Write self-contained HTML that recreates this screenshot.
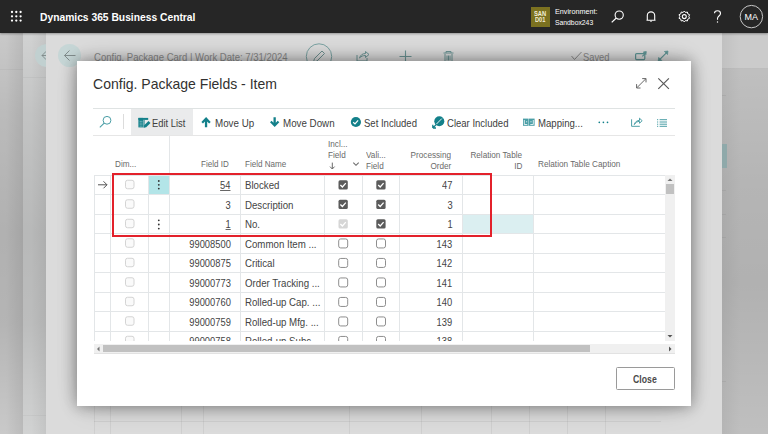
<!DOCTYPE html><html><head><meta charset="utf-8"><style>
html,body{margin:0;padding:0;width:768px;height:434px;overflow:hidden;background:#c4c4c4;font-family:"Liberation Sans", sans-serif;}
.t{position:absolute;white-space:nowrap;line-height:1;}
svg{position:absolute;overflow:visible}
</style></head><body>
<div style="position:absolute;left:0px;top:33px;width:23px;height:401px;background:linear-gradient(180deg,rgba(0,0,0,0) 0px,rgba(0,0,0,.07) 80px,rgba(0,0,0,.12) 200px,rgba(0,0,0,.10) 290px,rgba(0,0,0,.0) 401px),linear-gradient(90deg,rgba(0,0,0,0),rgba(0,0,0,0) 25%,rgba(0,0,0,.07)),#c9c9c9"></div>
<div style="position:absolute;left:23px;top:33px;width:23px;height:401px;background:linear-gradient(180deg,rgba(0,0,0,0) 0px,rgba(0,0,0,.07) 80px,rgba(0,0,0,.12) 200px,rgba(0,0,0,.10) 290px,rgba(0,0,0,.0) 401px),linear-gradient(90deg,rgba(0,0,0,0),rgba(0,0,0,0) 35%,rgba(0,0,0,.06)),#d1d2d2"></div>
<div style="position:absolute;left:46px;top:33px;width:676px;height:401px;background:#dbdbdb"></div>
<div style="position:absolute;left:722px;top:33px;width:46px;height:401px;background:linear-gradient(180deg,rgba(0,0,0,0) 35px,rgba(0,0,0,.06) 36px,rgba(0,0,0,.11) 150px,rgba(0,0,0,.13) 250px,rgba(0,0,0,.06) 401px),linear-gradient(90deg,rgba(0,0,0,.05),rgba(0,0,0,0) 40%),#cbcbcb"></div>
<div style="position:absolute;left:0px;top:69px;width:23px;height:1px;background:rgba(0,0,0,.035)"></div>
<div style="position:absolute;left:23px;top:77px;width:23px;height:1px;background:rgba(0,0,0,.035)"></div>
<div style="position:absolute;left:23px;top:415px;width:23px;height:1px;background:rgba(0,0,0,.03)"></div>
<div style="position:absolute;left:722px;top:68px;width:46px;height:1px;background:rgba(0,0,0,.04)"></div>
<div style="position:absolute;left:722px;top:144px;width:5px;height:24px;background:#8fa9aa"></div>
<div style="position:absolute;left:722px;top:95px;width:4px;height:1px;background:rgba(0,0,0,.05)"></div>
<div style="position:absolute;left:722px;top:190px;width:4px;height:1px;background:rgba(0,0,0,.05)"></div>
<div style="position:absolute;left:722px;top:214px;width:4px;height:1px;background:rgba(0,0,0,.05)"></div>
<div style="position:absolute;left:722px;top:237px;width:4px;height:1px;background:rgba(0,0,0,.05)"></div>
<div style="position:absolute;left:722px;top:381px;width:4px;height:1px;background:rgba(0,0,0,.05)"></div>
<div style="position:absolute;left:23px;top:33px;width:23px;height:40px;overflow:hidden"><div style="position:absolute;left:12px;top:11px;width:23px;height:23px;border-radius:50%;background:#c1d0d0"></div><svg style="left:0;top:0" width="23" height="40"><path d="M19 22.5h8M19 22.5l4.3-4.3M19 22.5l4.3 4.3" stroke="#7d8888" stroke-width=".9" fill="none"/></svg></div>
<div style="position:absolute;left:58px;top:44px;width:23px;height:23px;border-radius:50%;background:#c6d6d6"></div>
<svg style="left:0;top:0" width="768" height="434"><path d="M64.5 55.5h11M64.5 55.5l5-5M64.5 55.5l5 5" stroke="#7a8585" stroke-width=".9" fill="none"/></svg>
<div class="t" style="left:93.50px;top:52.19px;font-size:11px;color:#8a8a8a;font-weight:400;transform:scaleX(0.867);transform-origin:0 0;">Config. Package Card | Work Date: 7/31/2024</div>
<svg style="left:0;top:0" width="768" height="434"><circle cx="319" cy="56.5" r="12.7" stroke="#7aa2a2" stroke-width="1" fill="none"/><path d="M313.5 62l1-3.5 7.5-7.5 2.5 2.5-7.5 7.5z" stroke="#6d8f8f" stroke-width="1" fill="none"/><path d="M357 55v6h10v-3M359.5 58c1-3 3-4.5 6-4.5v-2l3.5 3-3.5 3v-2c-2.5 0-4.5 0.8-6 2.5z" stroke="#6d9696" stroke-width="1" fill="none"/><path d="M399.5 56.5h12M405.5 50.5v12" stroke="#6d9696" stroke-width="1.1" fill="none"/><path d="M443.5 53h10M446 53v-1.5h5v1.5M445 54v8h7v-8M447 55.5v5M448.5 55.5v5M450 55.5v5" stroke="#6d9696" stroke-width="1" fill="none"/><path d="M571.5 56l3 3.5 7-7.5" stroke="#8a8a8a" stroke-width="1" fill="none"/><rect x="635.6" y="53.6" width="9.2" height="6" rx="1" stroke="#5f9696" stroke-width="1.2" fill="none"/><path d="M642.3 56.3l3-3" stroke="#5f9696" stroke-width="1.1"/><path d="M646.3 51.6l-3 .4 2.6 2.6z" fill="#5f9696" stroke="#5f9696" stroke-width=".8" stroke-linejoin="round"/><path d="M659.6 59.6l7-7" stroke="#5f9696" stroke-width="1.1" fill="none"/><path d="M668 51l-3.6.5 3.1 3.1z M658.2 61l3.6-.5-3.1-3.1z" fill="#5f9696" stroke="#5f9696" stroke-width=".7" stroke-linejoin="round"/></svg>
<div class="t" style="left:583.00px;top:52.19px;font-size:11px;color:#8a8a8a;font-weight:400;transform:scaleX(0.85);transform-origin:0 0;">Saved</div>
<div style="position:absolute;left:94px;top:406px;width:1px;height:28px;background:rgba(0,0,0,.055)"></div>
<div style="position:absolute;left:110px;top:406px;width:1px;height:28px;background:rgba(0,0,0,.055)"></div>
<div style="position:absolute;left:181px;top:406px;width:1px;height:28px;background:rgba(0,0,0,.055)"></div>
<div style="position:absolute;left:203px;top:406px;width:1px;height:28px;background:rgba(0,0,0,.055)"></div>
<div style="position:absolute;left:349px;top:406px;width:1px;height:28px;background:rgba(0,0,0,.055)"></div>
<div style="position:absolute;left:421px;top:406px;width:1px;height:28px;background:rgba(0,0,0,.055)"></div>
<div style="position:absolute;left:491px;top:406px;width:1px;height:28px;background:rgba(0,0,0,.055)"></div>
<div style="position:absolute;left:529px;top:406px;width:1px;height:28px;background:rgba(0,0,0,.055)"></div>
<div style="position:absolute;left:567px;top:406px;width:1px;height:28px;background:rgba(0,0,0,.055)"></div>
<div style="position:absolute;left:605px;top:406px;width:1px;height:28px;background:rgba(0,0,0,.055)"></div>
<div style="position:absolute;left:94px;top:421px;width:567px;height:1px;background:rgba(0,0,0,.05)"></div>
<div style="position:absolute;left:0;top:0;width:768px;height:33px;z-index:10;background:#262626;box-shadow:0 1px 2px rgba(0,0,0,.32)">
<svg style="left:0;top:0" width="40" height="33"><circle cx="12" cy="12" r="1.15" fill="#fff"/><circle cx="16.3" cy="12" r="1.15" fill="#fff"/><circle cx="20.6" cy="12" r="1.15" fill="#fff"/><circle cx="12" cy="16.3" r="1.15" fill="#fff"/><circle cx="16.3" cy="16.3" r="1.15" fill="#fff"/><circle cx="20.6" cy="16.3" r="1.15" fill="#fff"/><circle cx="12" cy="20.6" r="1.15" fill="#fff"/><circle cx="16.3" cy="20.6" r="1.15" fill="#fff"/><circle cx="20.6" cy="20.6" r="1.15" fill="#fff"/></svg>
<div class="t" style="left:39.60px;top:11.62px;font-size:11.2px;color:#fff;font-weight:700;transform:scaleX(0.919);transform-origin:0 0;">Dynamics 365 Business Central</div>
<div style="position:absolute;left:531px;top:7px;width:19px;height:20px;background:#7b7120"></div>
<div class="t" style="left:533.60px;top:10.87px;font-size:6.3px;color:#f2eed8;font-weight:700;transform:scaleX(0.92);transform-origin:0 0;">SAN</div>
<div class="t" style="left:534.60px;top:17.17px;font-size:6.3px;color:#f2eed8;font-weight:700;transform:scaleX(0.9);transform-origin:0 0;">D01</div>
<div class="t" style="left:555.00px;top:9.24px;font-size:6.8px;color:#fff;font-weight:400;transform:scaleX(1.06);transform-origin:0 0;">Environment:</div>
<div class="t" style="left:555.00px;top:19.84px;font-size:6.8px;color:#fff;font-weight:400;transform:scaleX(1.0);transform-origin:0 0;">Sandbox243</div>
<svg style="left:0;top:0" width="768" height="33"><circle cx="619.2" cy="15.1" r="4.1" stroke="#fff" stroke-width="1.1" fill="none"/><path d="M616.3 18l-4.6 4.4" stroke="#fff" stroke-width="1.2"/><path d="M647.3 20.2v-4.6a3.7 3.7 0 0 1 7.4 0v4.6zM646.5 20.2h9" stroke="#fff" stroke-width="1.1" fill="none" stroke-linejoin="round"/><path d="M649.6 20.8l1.4 1.2 1.4-1.2z" fill="#fff"/><circle cx="684.3" cy="16.6" r="2" stroke="#fff" stroke-width="1.1" fill="none"/><path d="M684.3 11l1.2 1.5 1.9-.5.4 1.9 1.8.8-.8 1.8.8 1.8-1.8.8-.4 1.9-1.9-.5-1.2 1.5-1.2-1.5-1.9.5-.4-1.9-1.8-.8.8-1.8-.8-1.8 1.8-.8.4-1.9 1.9.5z" stroke="#fff" stroke-width="1" fill="none" stroke-linejoin="round"/><path d="M714.5 13.3c0-1.6 1.3-2.5 3-2.5s3 1 3 2.6c0 2.5-3 2.6-3 5v1.3" stroke="#fff" stroke-width="1.1" fill="none"/><circle cx="717.5" cy="22" r=".7" fill="#fff"/><circle cx="751.4" cy="16.6" r="11.2" stroke="#c8c8c8" stroke-width="1" fill="none"/></svg>
<div class="t" style="left:744.60px;top:13.18px;font-size:9.0px;color:#fff;font-weight:400;transform:scaleX(1.0);transform-origin:0 0;">MA</div>
</div>
<div style="position:absolute;left:77px;top:61px;width:614.4px;height:344.6px;background:#fff;box-shadow:0 0 13px 1px rgba(0,0,0,.30),0 -6px 26px -8px rgba(0,0,0,.22),0 6px 26px -8px rgba(0,0,0,.22)"></div>
<div class="t" style="left:92.90px;top:75.70px;font-size:15px;color:#323130;font-weight:400;transform:scaleX(0.935);transform-origin:0 0;">Config. Package Fields - Item</div>
<svg style="left:0;top:0" width="768" height="434"><path d="M636.8 87.8l9-9M642.2 78.6h3.8v3.8M636.6 84.1v3.9h3.9" stroke="#666" stroke-width="1" fill="none"/><path d="M658.3 78.3l10.6 10.6M668.9 78.3l-10.6 10.6" stroke="#5a5a5a" stroke-width="1.2" fill="none"/></svg>
<div style="position:absolute;left:93px;top:108px;width:582px;height:1px;background:#dfe3e3"></div>
<div style="position:absolute;left:93px;top:135px;width:582px;height:1px;background:#e6e6e6"></div>
<div style="position:absolute;left:131px;top:109px;width:62px;height:26px;background:#eaebec"></div>
<div style="position:absolute;left:123px;top:114px;width:1px;height:15px;background:#dcdcdc"></div>
<div class="t" style="left:152.00px;top:117.69px;font-size:11px;color:#404040;font-weight:400;transform:scaleX(0.85);transform-origin:0 0;">Edit List</div>
<div class="t" style="left:214.60px;top:117.69px;font-size:11px;color:#404040;font-weight:400;transform:scaleX(0.89);transform-origin:0 0;">Move Up</div>
<div class="t" style="left:283.20px;top:117.69px;font-size:11px;color:#404040;font-weight:400;transform:scaleX(0.888);transform-origin:0 0;">Move Down</div>
<div class="t" style="left:364.00px;top:117.69px;font-size:11px;color:#404040;font-weight:400;transform:scaleX(0.866);transform-origin:0 0;">Set Included</div>
<div class="t" style="left:446.60px;top:117.69px;font-size:11px;color:#404040;font-weight:400;transform:scaleX(0.866);transform-origin:0 0;">Clear Included</div>
<div class="t" style="left:537.80px;top:117.69px;font-size:11px;color:#404040;font-weight:400;transform:scaleX(0.873);transform-origin:0 0;">Mapping...</div>
<svg style="left:0;top:0" width="768" height="434"><circle cx="107" cy="120.3" r="3.9" stroke="#4a9ea6" stroke-width="1" fill="none"/><path d="M104.2 123.1l-4.4 4.3" stroke="#4a9ea6" stroke-width="1.1"/><rect x="138.4" y="117.9" width="9.8" height="2" fill="#13808a"/><rect x="138.4" y="117.9" width="4.6" height="9.5" fill="#13808a"/><path d="M140.2 120.8v6M141.9 120.8v6" stroke="#fff" stroke-width=".6" stroke-dasharray="1 .8"/><rect x="143" y="120" width="2" height="7.4" fill="#13808a" opacity=".55"/><path d="M143.6 127.8l.6-2.6 4.3-4.3 2 2-4.3 4.3z" fill="#13808a"/><path d="M206.1 117l4.6 4.9-1.6 1.5-1.9-2v5.9h-2.3v-5.9l-1.9 2-1.6-1.5z" fill="#13808a"/><path d="M274.7 127.1l4.6-4.9-1.6-1.5-1.9 2v-5.4h-2.3v5.4l-1.9-2-1.6 1.5z" fill="#13808a"/><circle cx="355.9" cy="122" r="5.1" fill="#13808a"/><path d="M353.2 122.3l1.8 1.7 3.1-3.7" stroke="#fff" stroke-width="1.2" fill="none"/><circle cx="439.3" cy="121.2" r="5" fill="#13808a"/><path d="M441.8 118.6l-5.5 5.6" stroke="#fff" stroke-width=".9"/><path d="M432.8 128l3.6-3.6M432.8 128v-3.2M432.8 128h3.2" stroke="#13808a" stroke-width="1.3" fill="none"/><rect x="523" y="118.6" width="5.6" height="7.2" fill="#4a9ea6"/><rect x="529" y="118.6" width="5.6" height="7.2" fill="#4a9ea6"/><path d="M524.3 120v4.5h3M533.3 120v4.5h-3M526 121.8h1.2M530.4 121.8h1.2" stroke="#fff" stroke-width=".8" fill="none"/><circle cx="599.3" cy="122.3" r=".85" fill="#13808a"/><circle cx="603.4" cy="122.3" r=".85" fill="#13808a"/><circle cx="607.5" cy="122.3" r=".85" fill="#13808a"/><path d="M631.6 119.3v7h8.2" stroke="#4a9ea6" stroke-width="1" fill="none"/><path d="M634.3 124.6c.6-2.6 2.6-4.2 5.2-4.2v-2.2l2.6 2.5-2.6 2.6v-1.9c-2 0-3.8.9-5.2 3.2z" stroke="#4a9ea6" stroke-width="1" fill="none" stroke-linejoin="round"/><path d="M657 119.7h1.2M657 122h1.2M657 124.2h1.2M657 126.3h1.2M659.6 119.7h7.4M659.6 122h7.4M659.6 124.2h7.4M659.6 126.3h7.4" stroke="#4a9ea6" stroke-width="1"/></svg>
<div style="position:absolute;left:0;top:0;width:768px;height:341px;overflow:hidden">
<div style="position:absolute;left:94px;top:175px;width:571px;height:1px;background:#e3e6e8"></div>
<div style="position:absolute;left:94px;top:194px;width:571px;height:1px;background:#e3e6e8"></div>
<div style="position:absolute;left:94px;top:214px;width:571px;height:1px;background:#e3e6e8"></div>
<div style="position:absolute;left:94px;top:233px;width:571px;height:1px;background:#e3e6e8"></div>
<div style="position:absolute;left:94px;top:253px;width:571px;height:1px;background:#e3e6e8"></div>
<div style="position:absolute;left:94px;top:272px;width:571px;height:1px;background:#e3e6e8"></div>
<div style="position:absolute;left:94px;top:292px;width:571px;height:1px;background:#e3e6e8"></div>
<div style="position:absolute;left:94px;top:311px;width:571px;height:1px;background:#e3e6e8"></div>
<div style="position:absolute;left:94px;top:331px;width:571px;height:1px;background:#e3e6e8"></div>
<div style="position:absolute;left:94px;top:175px;width:1px;height:166px;background:#e3e6e8"></div>
<div style="position:absolute;left:110px;top:175px;width:1px;height:166px;background:#e3e6e8"></div>
<div style="position:absolute;left:148px;top:175px;width:1px;height:166px;background:#e3e6e8"></div>
<div style="position:absolute;left:240px;top:175px;width:1px;height:166px;background:#e3e6e8"></div>
<div style="position:absolute;left:324px;top:175px;width:1px;height:166px;background:#e3e6e8"></div>
<div style="position:absolute;left:362px;top:175px;width:1px;height:166px;background:#e3e6e8"></div>
<div style="position:absolute;left:399px;top:175px;width:1px;height:166px;background:#e3e6e8"></div>
<div style="position:absolute;left:462px;top:175px;width:1px;height:166px;background:#e3e6e8"></div>
<div style="position:absolute;left:533px;top:175px;width:1px;height:166px;background:#e3e6e8"></div>
<div style="position:absolute;left:169px;top:135px;width:1px;height:206px;background:#e3e6e8"></div>
<div style="position:absolute;left:149px;top:176px;width:20px;height:18px;background:#b3e5e8"></div>
<div style="position:absolute;left:463px;top:215px;width:70px;height:18px;background:#dbeff1"></div>
</div>
<div class="t" style="left:114.60px;top:159.16px;font-size:9.5px;color:#6a6a6a;font-weight:400;transform:scaleX(0.86);transform-origin:0 0;">Dim...</div>
<div class="t" style="right:539.00px;top:159.36px;font-size:9.5px;color:#6a6a6a;font-weight:400;transform:scaleX(0.847);transform-origin:100% 0;">Field ID</div>
<div class="t" style="left:244.80px;top:159.36px;font-size:9.5px;color:#6a6a6a;font-weight:400;transform:scaleX(0.85);transform-origin:0 0;">Field Name</div>
<div class="t" style="left:328.30px;top:139.26px;font-size:9.5px;color:#6a6a6a;font-weight:400;transform:scaleX(0.86);transform-origin:0 0;">Incl...</div>
<div class="t" style="left:328.30px;top:150.06px;font-size:9.5px;color:#6a6a6a;font-weight:400;transform:scaleX(0.86);transform-origin:0 0;">Field</div>
<svg style="left:0;top:0" width="768" height="434"><path d="M353.3 162.6l2.7 2.7 2.7-2.7" stroke="#6a6a6a" stroke-width="1.1" fill="none"/><path d="M332.3 162.6v6.3M330 166.6l2.3 2.4 2.3-2.4" stroke="#6a6a6a" stroke-width="1" fill="none"/></svg>
<div class="t" style="left:366.25px;top:150.06px;font-size:9.5px;color:#6a6a6a;font-weight:400;transform:scaleX(0.86);transform-origin:0 0;">Vali...</div>
<div class="t" style="left:366.25px;top:160.66px;font-size:9.5px;color:#6a6a6a;font-weight:400;transform:scaleX(0.86);transform-origin:0 0;">Field</div>
<div class="t" style="right:317.20px;top:150.06px;font-size:9.5px;color:#6a6a6a;font-weight:400;transform:scaleX(0.86);transform-origin:100% 0;">Processing</div>
<div class="t" style="right:317.20px;top:160.66px;font-size:9.5px;color:#6a6a6a;font-weight:400;transform:scaleX(0.86);transform-origin:100% 0;">Order</div>
<div class="t" style="right:245.70px;top:150.06px;font-size:9.5px;color:#6a6a6a;font-weight:400;transform:scaleX(0.86);transform-origin:100% 0;">Relation Table</div>
<div class="t" style="right:245.70px;top:160.66px;font-size:9.5px;color:#6a6a6a;font-weight:400;transform:scaleX(0.86);transform-origin:100% 0;">ID</div>
<div class="t" style="left:537.90px;top:159.16px;font-size:9.5px;color:#6a6a6a;font-weight:400;transform:scaleX(0.863);transform-origin:0 0;">Relation Table Caption</div>
<div style="position:absolute;left:0;top:0;width:768px;height:341px;overflow:hidden">
<div class="t" style="right:537.60px;top:181.03px;font-size:10.3px;color:#444444;font-weight:400;transform:scaleX(0.906);transform-origin:100% 0;text-decoration:underline;text-underline-offset:1px;text-decoration-color:#666;">54</div>
<div class="t" style="left:245.20px;top:181.03px;font-size:10.3px;color:#444444;font-weight:400;transform:scaleX(0.94);transform-origin:0 0;">Blocked</div>
<div class="t" style="right:315.60px;top:181.03px;font-size:10.3px;color:#444444;font-weight:400;transform:scaleX(0.906);transform-origin:100% 0;">47</div>
<div class="t" style="right:537.60px;top:200.53px;font-size:10.3px;color:#444444;font-weight:400;transform:scaleX(0.906);transform-origin:100% 0;">3</div>
<div class="t" style="left:245.20px;top:200.53px;font-size:10.3px;color:#444444;font-weight:400;transform:scaleX(0.94);transform-origin:0 0;">Description</div>
<div class="t" style="right:315.60px;top:200.53px;font-size:10.3px;color:#444444;font-weight:400;transform:scaleX(0.906);transform-origin:100% 0;">3</div>
<div class="t" style="right:537.60px;top:220.03px;font-size:10.3px;color:#444444;font-weight:400;transform:scaleX(0.906);transform-origin:100% 0;text-decoration:underline;text-underline-offset:1px;text-decoration-color:#666;">1</div>
<div class="t" style="left:245.20px;top:220.03px;font-size:10.3px;color:#444444;font-weight:400;transform:scaleX(0.94);transform-origin:0 0;">No.</div>
<div class="t" style="right:315.60px;top:220.03px;font-size:10.3px;color:#444444;font-weight:400;transform:scaleX(0.906);transform-origin:100% 0;">1</div>
<div class="t" style="right:537.60px;top:239.53px;font-size:10.3px;color:#444444;font-weight:400;transform:scaleX(0.906);transform-origin:100% 0;">99008500</div>
<div class="t" style="left:245.20px;top:239.53px;font-size:10.3px;color:#444444;font-weight:400;transform:scaleX(0.94);transform-origin:0 0;">Common Item ...</div>
<div class="t" style="right:315.60px;top:239.53px;font-size:10.3px;color:#444444;font-weight:400;transform:scaleX(0.906);transform-origin:100% 0;">143</div>
<div class="t" style="right:537.60px;top:259.03px;font-size:10.3px;color:#444444;font-weight:400;transform:scaleX(0.906);transform-origin:100% 0;">99000875</div>
<div class="t" style="left:245.20px;top:259.03px;font-size:10.3px;color:#444444;font-weight:400;transform:scaleX(0.94);transform-origin:0 0;">Critical</div>
<div class="t" style="right:315.60px;top:259.03px;font-size:10.3px;color:#444444;font-weight:400;transform:scaleX(0.906);transform-origin:100% 0;">142</div>
<div class="t" style="right:537.60px;top:278.53px;font-size:10.3px;color:#444444;font-weight:400;transform:scaleX(0.906);transform-origin:100% 0;">99000773</div>
<div class="t" style="left:245.20px;top:278.53px;font-size:10.3px;color:#444444;font-weight:400;transform:scaleX(0.94);transform-origin:0 0;">Order Tracking ...</div>
<div class="t" style="right:315.60px;top:278.53px;font-size:10.3px;color:#444444;font-weight:400;transform:scaleX(0.906);transform-origin:100% 0;">141</div>
<div class="t" style="right:537.60px;top:298.03px;font-size:10.3px;color:#444444;font-weight:400;transform:scaleX(0.906);transform-origin:100% 0;">99000760</div>
<div class="t" style="left:245.20px;top:298.03px;font-size:10.3px;color:#444444;font-weight:400;transform:scaleX(0.94);transform-origin:0 0;">Rolled-up Cap. ...</div>
<div class="t" style="right:315.60px;top:298.03px;font-size:10.3px;color:#444444;font-weight:400;transform:scaleX(0.906);transform-origin:100% 0;">140</div>
<div class="t" style="right:537.60px;top:317.53px;font-size:10.3px;color:#444444;font-weight:400;transform:scaleX(0.906);transform-origin:100% 0;">99000759</div>
<div class="t" style="left:245.20px;top:317.53px;font-size:10.3px;color:#444444;font-weight:400;transform:scaleX(0.94);transform-origin:0 0;">Rolled-up Mfg. ...</div>
<div class="t" style="right:315.60px;top:317.53px;font-size:10.3px;color:#444444;font-weight:400;transform:scaleX(0.906);transform-origin:100% 0;">139</div>
<div class="t" style="right:537.60px;top:337.03px;font-size:10.3px;color:#444444;font-weight:400;transform:scaleX(0.906);transform-origin:100% 0;">99000758</div>
<div class="t" style="left:245.20px;top:337.03px;font-size:10.3px;color:#444444;font-weight:400;transform:scaleX(0.94);transform-origin:0 0;">Rolled-up Subc...</div>
<div class="t" style="right:315.60px;top:337.03px;font-size:10.3px;color:#444444;font-weight:400;transform:scaleX(0.906);transform-origin:100% 0;">138</div>
<svg style="left:0;top:0" width="768" height="434"><rect x="125.5" y="180.25" width="8.5" height="8.5" rx="2" stroke="#d4d4d4" stroke-width="1" fill="#fafafa"/><rect x="338.5" y="180.25" width="9.3" height="9.3" rx="1.5" fill="#5b5b5b"/><path d="M340.4 184.95l2 2 3.4-3.8" stroke="#fff" stroke-width="1.3" fill="none"/><rect x="376.3" y="180.25" width="9.3" height="9.3" rx="1.5" fill="#5b5b5b"/><path d="M378.2 184.95l2 2 3.4-3.8" stroke="#fff" stroke-width="1.3" fill="none"/><rect x="125.5" y="199.75" width="8.5" height="8.5" rx="2" stroke="#d4d4d4" stroke-width="1" fill="#fafafa"/><rect x="338.5" y="199.75" width="9.3" height="9.3" rx="1.5" fill="#5b5b5b"/><path d="M340.4 204.45l2 2 3.4-3.8" stroke="#fff" stroke-width="1.3" fill="none"/><rect x="376.3" y="199.75" width="9.3" height="9.3" rx="1.5" fill="#5b5b5b"/><path d="M378.2 204.45l2 2 3.4-3.8" stroke="#fff" stroke-width="1.3" fill="none"/><rect x="125.5" y="219.25" width="8.5" height="8.5" rx="2" stroke="#d4d4d4" stroke-width="1" fill="#fafafa"/><rect x="338.5" y="219.25" width="9.3" height="9.3" rx="1.5" fill="#d6d6d6"/><path d="M340.4 223.95l2 2 3.4-3.8" stroke="#fff" stroke-width="1.3" fill="none"/><rect x="376.3" y="219.25" width="9.3" height="9.3" rx="1.5" fill="#5b5b5b"/><path d="M378.2 223.95l2 2 3.4-3.8" stroke="#fff" stroke-width="1.3" fill="none"/><rect x="125.5" y="238.75" width="8.5" height="8.5" rx="2" stroke="#d4d4d4" stroke-width="1" fill="#fafafa"/><rect x="338.7" y="238.95" width="9" height="9" rx="2" stroke="#8e8e8e" stroke-width="1" fill="#fff"/><rect x="376.5" y="238.95" width="9" height="9" rx="2" stroke="#8e8e8e" stroke-width="1" fill="#fff"/><rect x="125.5" y="258.25" width="8.5" height="8.5" rx="2" stroke="#d4d4d4" stroke-width="1" fill="#fafafa"/><rect x="338.7" y="258.45" width="9" height="9" rx="2" stroke="#8e8e8e" stroke-width="1" fill="#fff"/><rect x="376.5" y="258.45" width="9" height="9" rx="2" stroke="#8e8e8e" stroke-width="1" fill="#fff"/><rect x="125.5" y="277.75" width="8.5" height="8.5" rx="2" stroke="#d4d4d4" stroke-width="1" fill="#fafafa"/><rect x="338.7" y="277.95" width="9" height="9" rx="2" stroke="#8e8e8e" stroke-width="1" fill="#fff"/><rect x="376.5" y="277.95" width="9" height="9" rx="2" stroke="#8e8e8e" stroke-width="1" fill="#fff"/><rect x="125.5" y="297.25" width="8.5" height="8.5" rx="2" stroke="#d4d4d4" stroke-width="1" fill="#fafafa"/><rect x="338.7" y="297.45" width="9" height="9" rx="2" stroke="#8e8e8e" stroke-width="1" fill="#fff"/><rect x="376.5" y="297.45" width="9" height="9" rx="2" stroke="#8e8e8e" stroke-width="1" fill="#fff"/><rect x="125.5" y="316.75" width="8.5" height="8.5" rx="2" stroke="#d4d4d4" stroke-width="1" fill="#fafafa"/><rect x="338.7" y="316.95" width="9" height="9" rx="2" stroke="#8e8e8e" stroke-width="1" fill="#fff"/><rect x="376.5" y="316.95" width="9" height="9" rx="2" stroke="#8e8e8e" stroke-width="1" fill="#fff"/><rect x="125.5" y="336.25" width="8.5" height="8.5" rx="2" stroke="#d4d4d4" stroke-width="1" fill="#fafafa"/><rect x="338.7" y="336.45" width="9" height="9" rx="2" stroke="#8e8e8e" stroke-width="1" fill="#fff"/><rect x="376.5" y="336.45" width="9" height="9" rx="2" stroke="#8e8e8e" stroke-width="1" fill="#fff"/></svg>
</div>
<svg style="left:0;top:0" width="768" height="434"><path d="M98 184.8h9M103.5 181.3l3.5 3.5-3.5 3.5" stroke="#555" stroke-width="1" fill="none"/><circle cx="158.8" cy="181" r=".9" fill="#333"/><circle cx="158.8" cy="184.8" r=".9" fill="#333"/><circle cx="158.8" cy="188.6" r=".9" fill="#333"/><circle cx="158.8" cy="220.3" r=".9" fill="#333"/><circle cx="158.8" cy="224.5" r=".9" fill="#333"/><circle cx="158.8" cy="228.6" r=".9" fill="#333"/></svg>
<div style="position:absolute;left:112px;top:173px;width:380px;height:64px;box-sizing:border-box;border:2px solid #e3212b"></div>
<div style="position:absolute;left:665px;top:175px;width:10px;height:166px;background:#f0f0f0"></div>
<div style="position:absolute;left:666px;top:184px;width:8px;height:10px;background:#c1c1c1"></div>
<div style="position:absolute;left:94px;top:344px;width:581px;height:10px;background:#f0f0f0;border-bottom:1px solid #e2e2e2;box-sizing:border-box"></div>
<div style="position:absolute;left:103px;top:345px;width:487px;height:7px;background:#c1c1c1"></div>
<svg style="left:0;top:0" width="768" height="434"><path d="M667.5 181l2.5-2.5 2.5 2.5z" fill="#777"/><path d="M667.5 335l2.5 2.5 2.5-2.5z" fill="#555"/><path d="M99.5 346.5l-2.5 2.5 2.5 2.5z" fill="#777"/><path d="M669 346.5l2.5 2.5-2.5 2.5z" fill="#555"/></svg>
<div style="position:absolute;left:616px;top:367px;width:59px;height:23px;box-sizing:border-box;border:1px solid #9a9a9a;border-radius:1.5px;background:#fff"></div>
<div class="t" style="left:633.30px;top:374.57px;font-size:10.2px;color:#4a4a4a;font-weight:700;transform:scaleX(0.855);transform-origin:0 0;">Close</div>
</body></html>
